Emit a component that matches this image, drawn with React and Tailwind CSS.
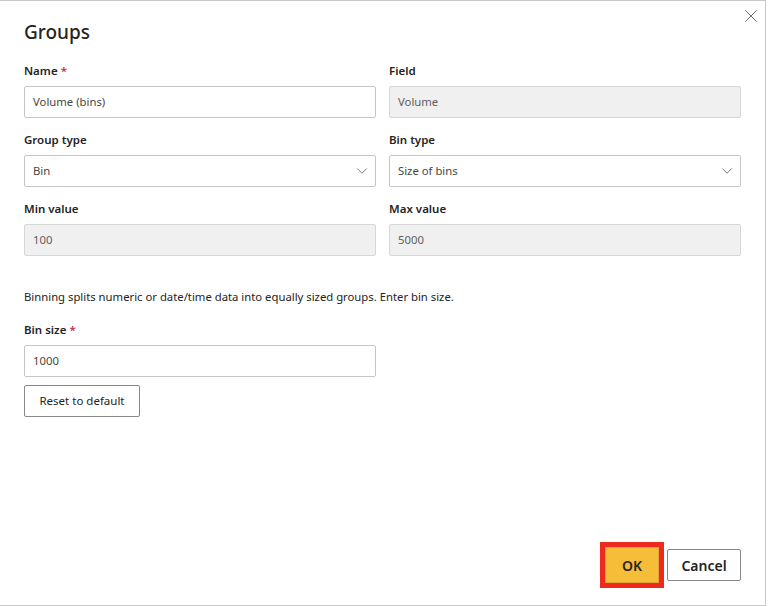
import { X, ChevronDown } from 'lucide-react'

function Label({ children, required }) {
  return (
    <div className="h-[16px] leading-[16px] text-[11.5px] font-semibold text-[#252423] mb-[7px]">
      {children}
      {required && <span className="text-[#c4314b] ml-[3px]">*</span>}
    </div>
  )
}

function Input({ value, disabled }) {
  return (
    <div className={`h-[32px] rounded-[2px] border flex items-center px-[8px] text-[11.3px] ${disabled ? 'bg-[#f0f0f0] border-[#d6d6d6] text-[#605e5c]' : 'bg-white border-[#c8c6c4] text-[#484644]'}`}>
      {value}
    </div>
  )
}

function Select({ value }) {
  return (
    <div className="h-[32px] rounded-[2px] border border-[#c8c6c4] bg-white flex items-center justify-between pl-[8px] pr-[4px] text-[11.3px] text-[#484644]">
      <span>{value}</span>
      <ChevronDown className="w-[18px] h-[18px] text-[#605e5c]" strokeWidth={1.1} />
    </div>
  )
}

function Field({ label, required, children }) {
  return (
    <div>
      <Label required={required}>{label}</Label>
      {children}
    </div>
  )
}

export default function App() {
  return (
    <div className="w-[766px] h-[606px] bg-white border-t border-r border-b border-[#c8c8c8] relative" style={{ fontFamily: '"Segoe UI", "Noto Sans", "Open Sans", sans-serif' }}>
      <button className="absolute right-[3px] top-[4px] w-[22px] h-[22px] flex items-center justify-center text-[#605e5c]">
        <X className="w-[22px] h-[22px]" strokeWidth={1} />
      </button>

      <div className="px-[24px] pt-[17px]">
        <h1 className="text-[19px] leading-[28px] font-medium text-[#252423] mb-[17px]">Groups</h1>

        <div className="grid grid-cols-2 gap-x-[13px] gap-y-[14px] w-[717px]">
          <Field label="Name" required><Input value="Volume (bins)" /></Field>
          <Field label="Field"><Input value="Volume" disabled /></Field>
          <Field label="Group type"><Select value="Bin" /></Field>
          <Field label="Bin type"><Select value="Size of bins" /></Field>
          <Field label="Min value"><Input value="100" disabled /></Field>
          <Field label="Max value"><Input value="5000" disabled /></Field>
        </div>

        <p className="mt-[33px] text-[11.3px] leading-[16px] text-[#252423]">
          Binning splits numeric or date/time data into equally sized groups. Enter bin size.
        </p>

        <div className="mt-[17px] w-[352px]">
          <Field label="Bin size" required><Input value="1000" /></Field>
          <button className="mt-[8px] h-[32px] w-[116px] rounded-[2px] border border-[#8a8886] bg-white text-[11.5px] text-[#252423]">
            Reset to default
          </button>
        </div>
      </div>

      <div className="absolute right-[24px] bottom-[17px] flex items-center gap-[3px]">
        <div className="border-[5px] border-[#ee2a1f]">
          <button className="w-[54px] h-[36px] bg-[#f6be38] border border-[#e8a23a] text-[14px] font-semibold text-[#252423]">
            OK
          </button>
        </div>
        <button className="w-[74px] h-[32px] rounded-[2px] border border-[#8a8886] bg-white text-[14px] font-semibold text-[#252423]">
          Cancel
        </button>
      </div>
    </div>
  )
}
